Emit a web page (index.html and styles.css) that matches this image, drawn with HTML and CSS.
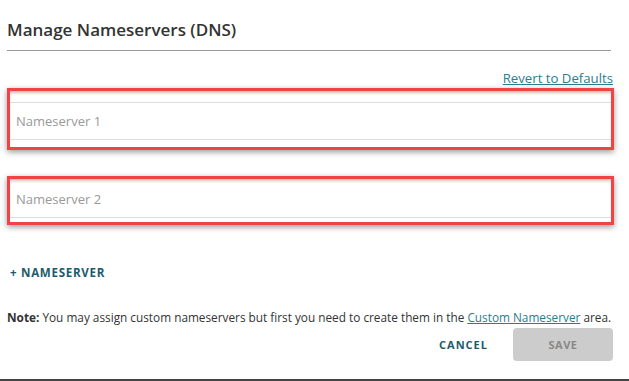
FILE: index.html
```
<!DOCTYPE html>
<html>
<head>
<meta charset="utf-8">
<link rel="stylesheet" href="styles.css">
</head>
<body>
<div class="page">
  <h2 class="title">Manage Nameservers (DNS)</h2>
  <div class="revert-row"><a class="revert" href="#">Revert to Defaults</a></div>
  <div class="hl hl-first">
    <div class="field">Nameserver 1</div>
  </div>
  <div class="hl hl-second">
    <div class="field">Nameserver 2</div>
  </div>
  <div class="add">+ NAMESERVER</div>
  <p class="note"><b>Note:</b> You may assign custom nameservers but first you need to create them in the <a href="#">Custom Nameserver</a> area.</p>
  <div class="actions">
    <span class="cancel">CANCEL</span>
    <span class="save">SAVE</span>
  </div>
</div>
</body>
</html>
```
FILE: styles.css
```
html, body {
  margin: 0;
  padding: 0;
  background: #fff;
}
body {
  font-family: "Open Sans", "Liberation Sans", sans-serif;
  color: #333;
}
.page {
  height: 381px;
  box-sizing: border-box;
  border-bottom: 2px solid #444;
  padding: 0 15px 0 7px;
}
.title {
  margin: 0;
  padding: 20px 0 10px;
  font-size: 17px;
  line-height: 20px;
  font-weight: 600;
  color: #333;
  border-bottom: 1px solid #999;
  margin-right: 3px;
}
.revert-row {
  margin-top: 18px;
  text-align: right;
  font-size: 13.2px;
  line-height: 18px;
  padding-right: 1px;
}
.revert {
  color: #2a7d8e;
  text-decoration: underline;
}
.hl {
  border: 3px solid #f04343;
  box-shadow: 0 2px 6px rgba(0,0,0,.4), inset 0 3px 3px -1px rgba(0,0,0,.25);
}
.hl-first {
  margin-top: 1px;
  padding: 11px 0 7px;
}
.hl-second {
  margin-top: 26px;
  padding: 1px 0 4px;
}
.field {
  height: 38px;
  box-sizing: border-box;
  border-top: 1px solid #ddd;
  border-bottom: 1px solid #ddd;
  padding-left: 6px;
  font-size: 13px;
  line-height: 36px;
  color: #999;
}
.add {
  margin-top: 40px;
  padding-left: 3px;
  font-size: 11.6px;
  line-height: 16px;
  font-weight: 700;
  letter-spacing: .7px;
  color: #1d5b6b;
}
.note {
  margin: 28px 0 0;
  font-size: 11.8px;
  line-height: 16px;
  color: #333;
  white-space: nowrap;
}
.note b {
  font-weight: 700;
}
.note a {
  color: #2a7d8e;
  text-decoration: underline;
}
.actions {
  margin-top: 3px;
  display: flex;
  justify-content: flex-end;
  align-items: center;
  gap: 25px;
  padding-right: 1px;
}
.cancel {
  font-size: 11px;
  font-weight: 700;
  letter-spacing: 1px;
  color: #1d5b6b;
}
.save {
  width: 100px;
  height: 33px;
  box-sizing: border-box;
  display: flex;
  align-items: center;
  justify-content: center;
  background: #ccc;
  border-radius: 4px;
  font-size: 11px;
  font-weight: 700;
  letter-spacing: .5px;
  color: #888;
}
```
